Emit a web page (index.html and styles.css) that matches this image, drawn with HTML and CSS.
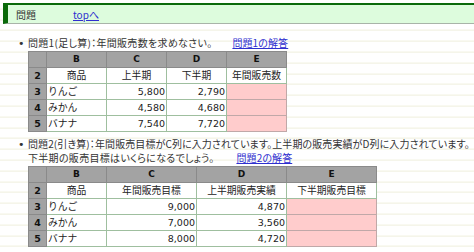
FILE: index.html
```html
<!DOCTYPE html>
<html lang="ja">
<head>
<meta charset="utf-8">
<link rel="stylesheet" href="styles.css">
</head>
<body>
<div class="page">
  <div class="hdr"><span class="hdr-title">問題</span><a class="lnk" href="#">topへ</a></div>
  <ul class="qs">
    <li>
      <p class="q">問題1(足し算)：年間販売数を求めなさい。<a class="lnk ans" href="#">問題1の解答</a></p>
      <table class="sheet t1">
        <colgroup><col class="c-rh"><col class="c-b"><col class="c-60"><col class="c-60"><col class="c-60"></colgroup>
        <tr class="colh"><th></th><th>B</th><th>C</th><th>D</th><th>E</th></tr>
        <tr><th class="rh">2</th><td class="ctr">商品</td><td class="ctr">上半期</td><td class="ctr">下半期</td><td class="ctr">年間販売数</td></tr>
        <tr><th class="rh">3</th><td>りんご</td><td class="num">5,800</td><td class="num">2,790</td><td class="pink"></td></tr>
        <tr><th class="rh">4</th><td>みかん</td><td class="num">4,580</td><td class="num">4,680</td><td class="pink"></td></tr>
        <tr><th class="rh">5</th><td>バナナ</td><td class="num">7,540</td><td class="num">7,720</td><td class="pink"></td></tr>
      </table>
    </li>
    <li class="q2">
      <p class="q"><span class="tight">問題2(引き算)：年間販売目標がC列に入力されています。上半期の販売実績がD列に入力されています。</span><br>下半期の販売目標はいくらになるでしょう。<a class="lnk ans ans2" href="#">問題2の解答</a></p>
      <table class="sheet t2">
        <colgroup><col class="c-rh"><col class="c-b"><col class="c-90"><col class="c-90"><col class="c-90"></colgroup>
        <tr class="colh"><th></th><th>B</th><th>C</th><th>D</th><th>E</th></tr>
        <tr><th class="rh">2</th><td class="ctr">商品</td><td class="ctr">年間販売目標</td><td class="ctr">上半期販売実績</td><td class="ctr">下半期販売目標</td></tr>
        <tr><th class="rh">3</th><td>りんご</td><td class="num">9,000</td><td class="num">4,870</td><td class="pink"></td></tr>
        <tr><th class="rh">4</th><td>みかん</td><td class="num">7,000</td><td class="num">3,560</td><td class="pink"></td></tr>
        <tr><th class="rh">5</th><td>バナナ</td><td class="num">8,000</td><td class="num">4,720</td><td class="pink"></td></tr>
      </table>
    </li>
  </ul>
</div>
</body>
</html>
```
FILE: styles.css
```css
html, body {
  margin: 0;
  padding: 0;
}
body {
  background-color: #fff;
  background-image: repeating-linear-gradient(to bottom, transparent 0, transparent 9.8px, #efefdc 9.8px, #efefdc 10.8px);
  background-position: 0 -1.4px;
  font-family: "DejaVu Sans", "Noto Sans CJK JP", sans-serif;
  color: #333;
  width: 474px;
  height: 252px;
  overflow: hidden;
}
.page {
  padding-top: 3px;
}
.hdr {
  margin-left: 3px;
  background: #ddfcdd;
  border-top: 2px solid #0a6a0a;
  border-left: 5px solid #0a6a0a;
  border-bottom: 1px solid #a8b4a8;
  height: 18px;
  display: flex;
  align-items: center;
  font-size: 10px;
  font-family: "Noto Sans CJK JP", sans-serif;
  font-feature-settings: "palt";
}
.hdr-title {
  padding-left: 8px;
  width: 57px;
}
.lnk {
  color: #2f2fcf;
  text-decoration: underline;
  font-family: "Noto Sans CJK JP", sans-serif;
  font-feature-settings: "palt";
}
.qs {
  margin: 12px 0 0 0;
  padding: 0 0 0 28px;
  list-style: disc;
  font-size: 10px;
}
.qs li::marker {
  content: "\2022  ";
  font-size: 11px;
  font-family: "DejaVu Sans", sans-serif;
  color: #333;
}
.q2 {
  margin-top: 5px;
}
.q {
  margin: 0 0 1px 0;
  line-height: 14px;
  font-family: "Noto Sans CJK JP", sans-serif;
  font-feature-settings: "palt";
  color: #333;
  letter-spacing: 0.3px;
  white-space: nowrap;
}
.tight {
  letter-spacing: 0.1px;
}
.ans {
  margin-left: 20px;
  letter-spacing: 0.1px;
}
.ans2 {
  margin-left: 22px;
}
.sheet {
  border-collapse: collapse;
  table-layout: fixed;
  font-size: 9.5px;
  font-family: "DejaVu Sans", "Noto Sans CJK JP", sans-serif;
  color: #222;
  border: 1px solid #9aa89a;
}
.t1 { width: 259px; }
.t2 { width: 348px; }
.c-rh { width: 18px; }
.c-b { width: 60px; }
.c-60 { width: 60px; }
.c-90 { width: 90px; }
.sheet th, .sheet td {
  height: 15px;
  padding: 0 1px;
  border: 1px solid #9fbf9f;
  line-height: 13px;
  white-space: nowrap;
  overflow: hidden;
}
.sheet td {
  background: #fff;
  font-family: "Noto Sans CJK JP", sans-serif;
  font-size: 9.8px;
}
.sheet td.num {
  text-align: right;
  font-family: "DejaVu Sans", sans-serif;
  font-size: 9.5px;
}
.sheet td.ctr {
  text-align: center;
}
.colh th {
  background: #a3a3a3;
  border-color: #8a8a8a;
  font-weight: bold;
  color: #111;
  font-size: 9px;
}
.sheet th.rh {
  background: #a3a3a3;
  border-color: #8a8a8a;
  font-weight: bold;
  color: #111;
  font-size: 9.5px;
}
.sheet td.pink {
  background: #ffcccc;
  border-color: #c0a8a8;
}
```
